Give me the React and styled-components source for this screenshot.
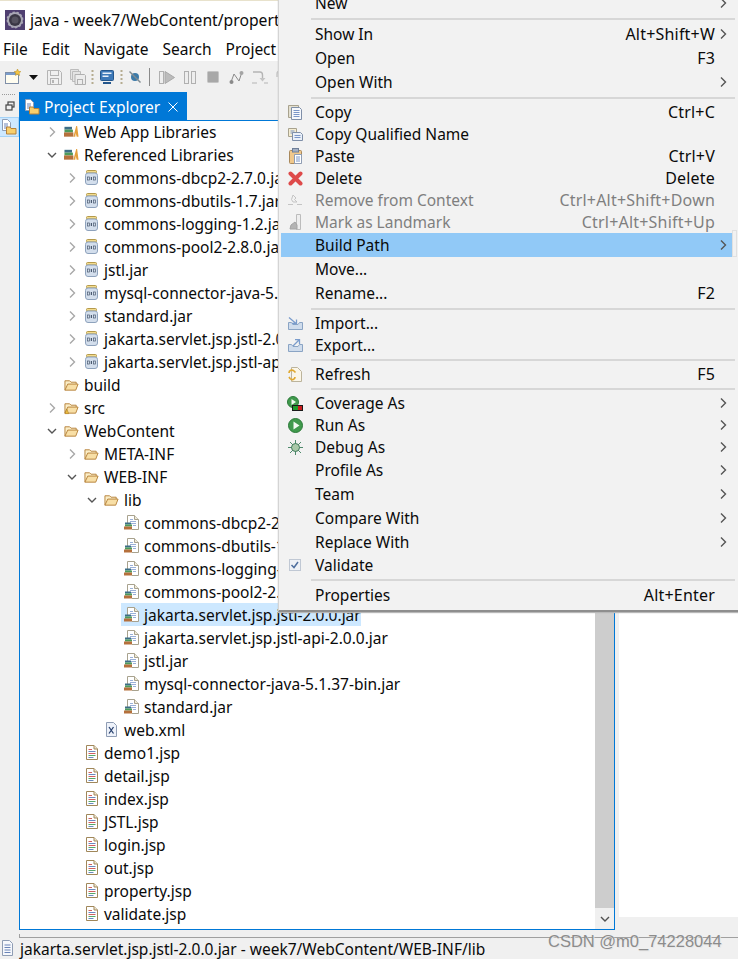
import React from "react";
import styled, { createGlobalStyle } from "styled-components";

const GlobalStyle = createGlobalStyle`
	html, body {
		margin: 0;
		padding: 0;
		background: #f0f0f0;
	}
	body {
		font-family: "Noto Sans", "Open Sans", "Liberation Sans", sans-serif;
		font-size: 15.5px;
		color: #0a0a0a;
	}
`;

const Window = styled.div`
	position: relative;
	width: 738px;
	height: 959px;
	overflow: hidden;
	background: #f0f0f0;
`;

const TitleBar = styled.div`
	display: flex;
	align-items: center;
	gap: 5px;
	height: 36px;
	padding: 3px 0 0 5px;
	box-sizing: border-box;
	background: #fff;
	border-top: 1px solid #e8e2cc;
	font-size: 15.7px;
	white-space: nowrap;
`;

const MenuBar = styled.div`
	display: flex;
	gap: 14px;
	height: 25px;
	padding-left: 3px;
	background: #fff;
	line-height: 27px;
`;

const Toolbar = styled.div`
	display: flex;
	align-items: center;
	height: 31px;
	padding: 1px 0 0 5px;
	box-sizing: border-box;
`;

const ToolSlot = styled.span`
	display: flex;
	margin-left: ${(p) => p.$gap || 0}px;
`;

const Workbench = styled.div`
	display: flex;
	height: 838px;
`;

const Strip = styled.div`
	display: flex;
	flex-direction: column;
	width: 19px;
	padding-top: 2px;
	box-sizing: border-box;
`;

const Dots = styled.div`
	width: 13px;
	margin-left: 2px;
	border-top: 1px dotted #9a9a9a;
`;

const StripButton = styled.div`
	display: flex;
	justify-content: center;
	margin-top: ${(p) => p.$top}px;
	height: ${(p) => p.$h}px;
	align-items: center;
	background: ${(p) => (p.$on ? "#cde8ff" : "transparent")};
	border: ${(p) => (p.$on ? "1px solid #a5d3f7" : "none")};
	border-left: none;
	box-sizing: border-box;
`;

const Center = styled.div`
	display: flex;
	flex-direction: column;
	width: 596px;
`;

const Tab = styled.div`
	display: flex;
	align-items: center;
	width: 168px;
	height: 28px;
	padding: 1px 0 0 5px;
	box-sizing: border-box;
	background: #0078d7;
	color: #fff;
	font-size: 15.6px;
	white-space: nowrap;
`;

const TabLabel = styled.span`
	margin: 0 8px 0 4px;
`;

const Panel = styled.div`
	display: flex;
	height: 810px;
	border: 1px solid #0078d7;
	box-sizing: border-box;
	background: #fff;
`;

const Tree = styled.div`
	flex: 1;
	min-width: 0;
	margin-top: -1px;
	overflow: hidden;
`;

const Scrollbar = styled.div`
	display: flex;
	flex-direction: column;
	width: 19px;
	background: #cdcdcd;
`;

const ScrollEnd = styled.div`
	display: flex;
	align-items: center;
	justify-content: center;
	height: 21px;
	margin-top: auto;
	background: #f0f0f0;
`;

const Row = styled.div`
	display: flex;
	align-items: center;
	height: 23px;
	padding-left: ${(p) => 24 + p.$level * 20}px;
	white-space: nowrap;
`;

const Twisty = styled.span`
	display: flex;
	justify-content: center;
	width: 20px;
	padding-right: 5px;
	box-sizing: border-box;
	flex: none;
`;

const RowBody = styled.span`
	display: flex;
	align-items: center;
	height: 23px;
	margin-left: -3px;
	padding: 0 0 0 3px;
	background: ${(p) => (p.$selected ? "#cde8ff" : "transparent")};
`;

const RowIcon = styled.span`
	display: flex;
	justify-content: center;
	width: 20px;
	padding-right: 5px;
	box-sizing: border-box;
	flex: none;
`;

const RightColumn = styled.div`
	width: 119px;
	margin-left: 4px;
	height: 825px;
	background: #fff;
`;

const StatusBar = styled.div`
	position: relative;
	display: flex;
	align-items: center;
	height: 22px;
	margin-top: 7px;
	padding-left: 2px;
	white-space: nowrap;
	&::before {
		content: "";
		position: absolute;
		left: 19px;
		right: 0;
		top: -3px;
		height: 3px;
		border-left: 1px solid #a0a0a0;
		border-bottom: 1px solid #a0a0a0;
	}
`;

const StatusText = styled.span`
	margin: 2px 0 0 7px;
	line-height: 20px;
`;

const Watermark = styled.div`
	position: absolute;
	left: 548px;
	top: 931px;
	font-family: "Liberation Sans", Arial, sans-serif;
	font-size: 16.5px;
	line-height: 20px;
	color: #8c8c8c;
	text-shadow: 1px 1px 0 #e8e8e8;
	white-space: nowrap;
`;

const ContextMenu = styled.div`
	position: absolute;
	left: 278px;
	top: -9px;
	width: 460px;
	padding: 0 6px 3px 2px;
	box-sizing: border-box;
	background: #f2f2f2;
	border-left: 1px solid #d4d4d4;
	border-bottom: 2px solid #8e8e8e;
	box-shadow: 0 1px 1px #b8b8b8;
	white-space: nowrap;
`;

const MenuRow = styled.div`
	position: relative;
	display: flex;
	align-items: center;
	height: ${(p) => (p.$tall ? 24 : 22)}px;
	color: ${(p) => (p.$disabled ? "#7f7f7f" : "#0a0a0a")};
	background: ${(p) => (p.$active ? "#91c9f7" : "transparent")};
	${(p) =>
		p.$active &&
		`&::after {
			content: "";
			position: absolute;
			left: 100%;
			top: -3px;
			bottom: 0;
			width: 5px;
			border: 1px solid #e0e0e0;
			box-sizing: border-box;
		}`}
`;

const MenuIcon = styled.span`
	display: flex;
	justify-content: center;
	width: 30px;
	margin-right: 4px;
	flex: none;
	padding-right: 2px;
	box-sizing: border-box;
`;

const Shortcut = styled.span`
	margin-left: auto;
	padding-right: 17px;
	font-size: 16px;
	letter-spacing: 0.2px;
`;

const SubArrow = styled.span`
	position: absolute;
	right: 4px;
	top: 50%;
	display: flex;
	margin-top: -6px;
`;

const Separator = styled.div`
	height: 2px;
	margin: 3px -3px 2px 30px;
	background: #d7d7d7;
`;

/* ---- drawings ---- */

const Chevron = ({ open, color }) =>
	open ? (
		<svg width="10" height="10" viewBox="0 0 10 10">
			<path d="M1 3l4 4 4-4" fill="none" stroke={color || "#555"} strokeWidth="1.4" />
		</svg>
	) : (
		<svg width="10" height="12" viewBox="0 0 10 12">
			<path d="M3 1.500l4.500 4.500L3 10.500" fill="none" stroke={color || "#a8a8a8"} strokeWidth="1.4" />
		</svg>
	);

const Eclipse = () => (
	<svg width="20" height="20" viewBox="0 0 20 20">
		<rect width="20" height="20" fill="#4f3f70" />
		<circle cx="10" cy="10" r="8.500" fill="#a8a6b4" />
		<circle cx="10" cy="10" r="8.500" fill="none" stroke="#4f3f70" strokeWidth="1.400" strokeDasharray="2 2.400" />
		<circle cx="10" cy="10" r="6" fill="#3a3745" />
		<circle cx="10" cy="10" r="3.500" fill="#55525f" />
	</svg>
);

const Library = () => (
	<svg width="16" height="13" viewBox="0 0 16 13">
		<rect x="0.500" y="1.500" width="8" height="3" fill="#3d6e86" />
		<rect x="0.500" y="4.500" width="9" height="3" fill="#4d9a5a" />
		<rect x="0" y="7.500" width="10" height="4.500" fill="#b5703c" />
		<path d="M10 12l3-11.500h1L15.500 12h-2L12.500 8 12 12z" fill="#e6a03c" />
	</svg>
);

const Folder = ({ warn }) => (
	<svg width="16" height="14" viewBox="0 0 16 14">
		<path d="M1 12.500V2.500h5l1.500 1.500H13v2" fill="#fbeec8" stroke="#b5813a" />
		<path d="M1 12.500L4 6h11l-2.500 6.500z" fill="#f8dfa6" stroke="#b5813a" />
		{warn && <path d="M1 13l2-5 2 5z" fill="#f0c040" stroke="#a87820" strokeWidth="0.600" />}
	</svg>
);

const Jar = () => (
	<svg width="13" height="15" viewBox="0 0 13 15">
		<rect x="1.500" y="0.500" width="10" height="2.500" rx="1" fill="#f4dc8c" stroke="#b59a4c" />
		<rect x="0.500" y="3" width="12" height="11.500" rx="2.500" fill="#d3deec" stroke="#8ea2bc" />
		<rect x="2.500" y="7" width="2" height="3" fill="none" stroke="#4a5a70" strokeWidth="0.700" />
		<rect x="5.800" y="7" width="1.200" height="3" fill="#4a5a70" />
		<rect x="8.500" y="7" width="2" height="3" fill="none" stroke="#4a5a70" strokeWidth="0.700" />
	</svg>
);

const JarDoc = () => (
	<svg width="15" height="15" viewBox="0 0 15 15">
		<path d="M3.500 9V.5h7l4 4v10H8" fill="#fff" stroke="#a8a28e" />
		<path d="M10.500.5v4h4" fill="#eee9d8" stroke="#a8a28e" />
		<path d="M6 4.500h3M6 6.500h6M7 8.500h5M9 10.500h3" stroke="#9ab0d8" />
		<rect x="1" y="7.500" width="6" height="2" fill="#3d6e86" />
		<rect x="1" y="9.500" width="7" height="2" fill="#4d9a5a" />
		<rect x="0" y="11.500" width="8" height="3" fill="#b5703c" />
	</svg>
);

const JspDoc = () => (
	<svg width="12" height="15" viewBox="0 0 12 15">
		<path d="M.5.500h7.500l3.500 3.500v10.500H.5z" fill="#fff" stroke="#a0875a" />
		<path d="M8 .5v3.500h3.500" fill="#efe6d0" stroke="#a0875a" />
		<path d="M2.500 4.500h3.500" stroke="#d06060" />
		<path d="M2.500 6.500h7" stroke="#6a8ac0" />
		<path d="M2.500 8.500h7" stroke="#d06060" />
		<path d="M2.500 10.500h7" stroke="#58a868" />
		<path d="M2.500 12.500h5" stroke="#6a8ac0" />
	</svg>
);

const XmlDoc = () => (
	<svg width="11" height="15" viewBox="0 0 11 15">
		<path d="M.5.500h7l3 3v11H.5z" fill="#eef2fa" stroke="#8f9db4" />
		<path d="M3 5l4.500 6.500M7.500 5L3 11.500" stroke="#27406e" strokeWidth="1.300" />
	</svg>
);

const PlainDoc = () => (
	<svg width="11" height="16" viewBox="0 0 11 16">
		<path d="M.5.500h7l3 3v12H.5z" fill="#f6f8fc" stroke="#8f9db4" />
		<path d="M2.500 5h6M2.500 7.500h6M2.500 10h6M2.500 12.500h6" stroke="#6a84b8" />
	</svg>
);

const ExplorerIcon = () => (
	<svg width="16" height="16" viewBox="0 0 16 16">
		<path d="M1.500.5h5l3 3v8h-8z" fill="#fff" stroke="#8f9db4" />
		<path d="M3 5h4M3 7h4M3 9h4" stroke="#6a84b8" />
		<path d="M5.500 15V8h3.500l1 1.500h5V15z" fill="#f8cf6c" stroke="#b5813a" />
	</svg>
);

const RestoreIcon = () => (
	<svg width="10" height="10" viewBox="0 0 10 10">
		<rect x="3" y="1" width="6" height="5" fill="none" stroke="#444" strokeWidth="1.200" />
		<rect x="1" y="4" width="6" height="5" fill="#f0f0f0" stroke="#444" strokeWidth="1.200" />
	</svg>
);

const CloseX = () => (
	<svg width="10" height="10" viewBox="0 0 10 10">
		<path d="M.5.500l9 9M9.500.5l-9 9" stroke="#fff" />
	</svg>
);

const NewWindow = () => (
	<svg width="16" height="16" viewBox="0 0 16 16">
		<rect x="0.500" y="3.500" width="13" height="11" fill="#fffdf0" stroke="#7f8fa8" />
		<rect x="1" y="4" width="12" height="2" fill="#7a9ccc" />
		<path d="M12.500 0l1 2.300 2.300.3-1.700 1.600.5 2.300-2.100-1.200-2.100 1.200.5-2.300L9.200 2.600l2.300-.3z" fill="#f5c542" stroke="#b08a20" strokeWidth="0.500" />
	</svg>
);

const DropTriangle = () => (
	<svg width="9" height="5" viewBox="0 0 9 5">
		<path d="M0 0h9L4.500 5z" fill="#111" />
	</svg>
);

const Floppy = () => (
	<svg width="15" height="15" viewBox="0 0 15 15">
		<path d="M.5.500h12l2 2v12H.5z" fill="#f0f0f0" stroke="#b4b4b4" />
		<rect x="3.500" y="0.500" width="8" height="5" fill="none" stroke="#b4b4b4" />
		<rect x="3.500" y="8.500" width="8" height="6" fill="none" stroke="#b4b4b4" />
		<rect x="5" y="10" width="2" height="3" fill="#b4b4b4" />
	</svg>
);

const FloppyAll = () => (
	<svg width="16" height="16" viewBox="0 0 16 16">
		<path d="M.5.500h8v10h-8z" fill="#e4e4e4" stroke="#bcbcbc" />
		<path d="M2.500 2.500h8v10h-8z" fill="#e4e4e4" stroke="#bcbcbc" />
		<path d="M5 5.500h9.500l1 1v9H5z" fill="#ececec" stroke="#b0b0b0" />
		<rect x="7.500" y="10.500" width="5" height="5" fill="none" stroke="#b0b0b0" />
	</svg>
);

const ToolDots = () => (
	<svg width="3" height="15" viewBox="0 0 3 15">
		<path d="M1.500 0v15" stroke="#b5ac90" strokeWidth="2" strokeDasharray="2 2" />
	</svg>
);

const Monitor = () => (
	<svg width="14" height="14" viewBox="0 0 14 14">
		<rect x="0.500" y="0.500" width="13" height="10" rx="1" fill="#3c78b8" stroke="#24568c" />
		<rect x="2.500" y="2.500" width="9" height="1.500" fill="#e8f0fa" />
		<rect x="2.500" y="5.500" width="6" height="1.500" fill="#e8f0fa" />
		<path d="M3 13h8" stroke="#24568c" strokeWidth="2" />
	</svg>
);

const SkipBreak = () => (
	<svg width="12" height="12" viewBox="0 0 12 12">
		<circle cx="6" cy="6" r="4" fill="#3c7aa8" />
		<path d="M0.500 0.500l11 11" stroke="#7f8a90" strokeWidth="1.400" />
	</svg>
);

const ToolDivider = styled.span`
	width: 1px;
	height: 18px;
	background: #8a8a8a;
	margin-left: 8px;
`;

const Resume = () => (
	<svg width="16" height="13" viewBox="0 0 16 13">
		<rect x="0.500" y="0.500" width="4" height="12" fill="#eee" stroke="#b0b0b0" />
		<path d="M6 .5L15.500 6.500 6 12.500z" fill="#bcbcbc" stroke="#a8a8a8" />
	</svg>
);

const Suspend = () => (
	<svg width="12" height="13" viewBox="0 0 12 13">
		<rect x="0.500" y="0.500" width="4" height="12" fill="#eee" stroke="#b0b0b0" />
		<rect x="7.500" y="0.500" width="4" height="12" fill="#eee" stroke="#b0b0b0" />
	</svg>
);

const StopSq = () => (
	<svg width="12" height="12" viewBox="0 0 12 12">
		<rect x="0.500" y="0.500" width="11" height="11" rx="1" fill="#a8a8a8" stroke="#c4c4c4" />
	</svg>
);

const Disconnect = () => (
	<svg width="15" height="15" viewBox="0 0 15 15">
		<path d="M2 12L5 4l5 7 3-9" fill="none" stroke="#8a8a8a" />
		<circle cx="2.500" cy="12" r="2" fill="#8a8a8a" />
		<circle cx="12.500" cy="3" r="2" fill="#a4a4a4" />
	</svg>
);

const StepInto = () => (
	<svg width="16" height="14" viewBox="0 0 16 14">
		<path d="M1 2h7c2 0 2.500 1.500 2.500 3v5" fill="none" stroke="#b4b4b4" strokeWidth="1.400" />
		<path d="M7.500 8l3 3.500 3-3.500z" fill="#c4c4c4" />
		<path d="M0 13h5M12 13h4" stroke="#b4b4b4" />
	</svg>
);

const StepReturn = () => (
	<svg width="8" height="14" viewBox="0 0 8 14">
		<path d="M1 7V4c0-2 1.500-3 3-3h4" fill="none" stroke="#c4c4c4" strokeWidth="1.400" />
	</svg>
);

const CopyIcon = () => (
	<svg width="15" height="15" viewBox="0 0 15 15">
		<path d="M.5.500h10v12h-10z" fill="#e4e0d0" stroke="#a8a28e" />
		<path d="M3.500 2.500h8l2 2v10h-10z" fill="#f6f8fc" stroke="#7f8fa8" />
		<path d="M5.500 5.500h6M5.500 7.500h6M5.500 9.500h6M5.500 11.500h6" stroke="#7a96c8" />
	</svg>
);

const CopyNameIcon = () => (
	<svg width="15" height="13" viewBox="0 0 15 13">
		<path d="M.5.500h8v8h-8z" fill="#f4ecd0" stroke="#a8a28e" />
		<path d="M2.500 3h4M2.500 5h4" stroke="#7a96c8" />
		<path d="M4.500 4.500h8l2 2v6h-10z" fill="#eaf0f8" stroke="#7f8fa8" />
		<path d="M6.500 7.500h6M6.500 9.500h6" stroke="#7a96c8" />
	</svg>
);

const PasteIcon = () => (
	<svg width="13" height="16" viewBox="0 0 13 16">
		<rect x="0.500" y="2.500" width="12" height="13" rx="1" fill="#f0c88c" stroke="#a8885c" />
		<rect x="3.500" y="0.500" width="6" height="3.500" fill="#a4b0c4" stroke="#6f7f98" />
		<path d="M5.500 6.500h7v9h-7z" fill="#fff" stroke="#8f9db4" />
		<path d="M7 9h4M7 11h4M7 13h4" stroke="#7a96c8" />
	</svg>
);

const DeleteIcon = () => (
	<svg width="15" height="15" viewBox="0 0 15 15">
		<path d="M2.500 2.500l10 10M12.500 2.500l-10 10" stroke="#de4a4a" strokeWidth="4" strokeLinecap="round" />
	</svg>
);

const RemoveIcon = () => (
	<svg width="14" height="12" viewBox="0 0 14 12">
		<path d="M5 1l3 3-1.500 1.500L9 8H5L3.500 5.500z" fill="none" stroke="#c4c4c4" />
		<path d="M0 10.500h5M9 10.500h5" stroke="#c4c4c4" />
	</svg>
);

const LandmarkIcon = () => (
	<svg width="12" height="16" viewBox="0 0 12 16">
		<path d="M7.500.5h4v15h-4z" fill="#eee" stroke="#bcbcbc" />
		<path d="M1 15l1-4 4-3 2 3v4z" fill="#b4b4b4" stroke="#a4a4a4" />
	</svg>
);

const ImportIcon = ({ out }) => (
	<svg width="15" height="13" viewBox="0 0 15 13">
		<path d="M.5 5.500h3l1.500 2h5l1.500-2h3v7H.5z" fill="#cfdcec" stroke="#8aa4c4" />
		{out ? (
			<path d="M5 7l6-6M7 .5h4.500V5" fill="none" stroke="#7a9ccc" strokeWidth="1.300" />
		) : (
			<path d="M1 .5l7 6M8.500 2.500v4H4" fill="none" stroke="#7a9ccc" strokeWidth="1.300" />
		)}
	</svg>
);

const RefreshIcon = () => (
	<svg width="14" height="15" viewBox="0 0 14 15">
		<path d="M3.500.5h6l4 4v10h-10z" fill="#fbf6e8" stroke="#bcb49c" />
		<path d="M1 6c0-2.500 3-4 5-2l1.500 1.500M7 10c0 2.500-3 3.500-5 1.500L1 10" fill="none" stroke="#e0a830" strokeWidth="1.700" />
	</svg>
);

const RunIcon = () => (
	<svg width="15" height="15" viewBox="0 0 15 15">
		<circle cx="7.500" cy="7.500" r="7" fill="#3f9a4c" stroke="#2d7a3a" />
		<path d="M5.500 3.500L11.500 7.500 5.500 11.500z" fill="#f0faf0" />
	</svg>
);

const CoverageIcon = () => (
	<svg width="16" height="15" viewBox="0 0 16 15">
		<circle cx="6" cy="6" r="5.500" fill="#3f9a4c" stroke="#2d7a3a" />
		<path d="M4.500 3L9 6 4.500 9z" fill="#f0faf0" />
		<rect x="5.500" y="9.500" width="10" height="5" fill="#c81e1e" stroke="#1a1a1a" />
		<rect x="6" y="10" width="5" height="4" fill="#1f9a2c" />
	</svg>
);

const DebugIcon = () => (
	<svg width="15" height="15" viewBox="0 0 15 15">
		<path d="M0 7.500h15M2 2l11 11M13 2L2 13M7.500 0v15" stroke="#4f8a6c" />
		<circle cx="7.500" cy="7.500" r="4" fill="#a8c8a8" stroke="#3f7a5c" />
	</svg>
);

const CheckIcon = () => (
	<svg width="12" height="12" viewBox="0 0 12 12">
		<rect x="0.500" y="0.500" width="11" height="11" fill="#eef1f6" stroke="#c0c8d4" />
		<path d="M2.500 6l2.500 2.500 4-5.500" fill="none" stroke="#4f6f9f" strokeWidth="1.500" />
	</svg>
);

/* ---- data ---- */

const jarNames = [
	"commons-dbcp2-2.7.0.jar",
	"commons-dbutils-1.7.jar",
	"commons-logging-1.2.jar",
	"commons-pool2-2.8.0.jar",
	"jstl.jar",
	"mysql-connector-java-5.1.37-bin.jar",
	"standard.jar",
	"jakarta.servlet.jsp.jstl-2.0.0.jar",
	"jakarta.servlet.jsp.jstl-api-2.0.0.jar",
];

const libFiles = [
	"commons-dbcp2-2.7.0.jar",
	"commons-dbutils-1.7.jar",
	"commons-logging-1.2.jar",
	"commons-pool2-2.8.0.jar",
	"jakarta.servlet.jsp.jstl-2.0.0.jar",
	"jakarta.servlet.jsp.jstl-api-2.0.0.jar",
	"jstl.jar",
	"mysql-connector-java-5.1.37-bin.jar",
	"standard.jar",
];

const jspFiles = ["demo1.jsp", "detail.jsp", "index.jsp", "JSTL.jsp", "login.jsp", "out.jsp", "property.jsp", "validate.jsp"];

const treeRows = [
	{ level: 0, twisty: "closed", icon: <Library />, label: "Web App Libraries" },
	{ level: 0, twisty: "open", icon: <Library />, label: "Referenced Libraries" },
	...jarNames.map((label) => ({ level: 1, twisty: "closed", icon: <Jar />, label })),
	{ level: 0, icon: <Folder />, label: "build" },
	{ level: 0, twisty: "closed", icon: <Folder warn />, label: "src" },
	{ level: 0, twisty: "open", icon: <Folder />, label: "WebContent" },
	{ level: 1, twisty: "closed", icon: <Folder />, label: "META-INF" },
	{ level: 1, twisty: "open", icon: <Folder />, label: "WEB-INF" },
	{ level: 2, twisty: "open", icon: <Folder />, label: "lib" },
	...libFiles.map((label, i) => ({ level: 3, icon: <JarDoc />, label, selected: i === 4 })),
	{ level: 2, icon: <XmlDoc />, label: "web.xml" },
	...jspFiles.map((label) => ({ level: 1, icon: <JspDoc />, label })),
];

const menuItems = [
	{ label: "New", tall: true, sub: true },
	{ sep: true },
	{ label: "Show In", tall: true, keys: "Alt+Shift+W", sub: true },
	{ label: "Open", tall: true, keys: "F3" },
	{ label: "Open With", tall: true, sub: true },
	{ sep: true },
	{ label: "Copy", icon: <CopyIcon />, keys: "Ctrl+C" },
	{ label: "Copy Qualified Name", icon: <CopyNameIcon /> },
	{ label: "Paste", icon: <PasteIcon />, keys: "Ctrl+V" },
	{ label: "Delete", icon: <DeleteIcon />, keys: "Delete" },
	{ label: "Remove from Context", icon: <RemoveIcon />, keys: "Ctrl+Alt+Shift+Down", disabled: true },
	{ label: "Mark as Landmark", icon: <LandmarkIcon />, keys: "Ctrl+Alt+Shift+Up", disabled: true },
	{ label: "Build Path", tall: true, sub: true, active: true },
	{ label: "Move...", tall: true },
	{ label: "Rename...", tall: true, keys: "F2" },
	{ sep: true },
	{ label: "Import...", icon: <ImportIcon /> },
	{ label: "Export...", icon: <ImportIcon out /> },
	{ sep: true },
	{ label: "Refresh", icon: <RefreshIcon />, keys: "F5" },
	{ sep: true },
	{ label: "Coverage As", icon: <CoverageIcon />, sub: true },
	{ label: "Run As", icon: <RunIcon />, sub: true },
	{ label: "Debug As", icon: <DebugIcon />, sub: true },
	{ label: "Profile As", tall: true, sub: true },
	{ label: "Team", tall: true, sub: true },
	{ label: "Compare With", tall: true, sub: true },
	{ label: "Replace With", tall: true, sub: true },
	{ label: "Validate", icon: <CheckIcon /> },
	{ sep: true },
	{ label: "Properties", tall: true, keys: "Alt+Enter" },
];

function TreeRow({ row }) {
	return (
		<Row $level={row.level}>
			<Twisty>{row.twisty && <Chevron open={row.twisty === "open"} />}</Twisty>
			<RowBody $selected={row.selected}>
				<RowIcon>{row.icon}</RowIcon>
				{row.label}
			</RowBody>
		</Row>
	);
}

function App() {
	return (
		<>
			<GlobalStyle />
			<Window>
				<TitleBar>
					<Eclipse />
					java - week7/WebContent/property.jsp - Eclipse IDE
				</TitleBar>
				<MenuBar>
					<span>File</span>
					<span>Edit</span>
					<span>Navigate</span>
					<span>Search</span>
					<span>Project</span>
				</MenuBar>
				<Toolbar>
					<NewWindow />
					<ToolSlot $gap={8}><DropTriangle /></ToolSlot>
					<ToolSlot $gap={9}><Floppy /></ToolSlot>
					<ToolSlot $gap={8}><FloppyAll /></ToolSlot>
					<ToolSlot $gap={5}><ToolDots /></ToolSlot>
					<ToolSlot $gap={6}><Monitor /></ToolSlot>
					<ToolSlot $gap={6}><ToolDots /></ToolSlot>
					<ToolSlot $gap={6}><SkipBreak /></ToolSlot>
					<ToolDivider />
					<ToolSlot $gap={9}><Resume /></ToolSlot>
					<ToolSlot $gap={9}><Suspend /></ToolSlot>
					<ToolSlot $gap={11}><StopSq /></ToolSlot>
					<ToolSlot $gap={10}><Disconnect /></ToolSlot>
					<ToolSlot $gap={8}><StepInto /></ToolSlot>
					<ToolSlot $gap={8}><StepReturn /></ToolSlot>
				</Toolbar>
				<Workbench>
					<Strip>
						<Dots />
						<StripButton $top={6} $h={10}><RestoreIcon /></StripButton>
						<StripButton $top={6} $h={20} $on><ExplorerIcon /></StripButton>
					</Strip>
					<Center>
						<Tab>
							<ExplorerIcon />
							<TabLabel>Project Explorer</TabLabel>
							<CloseX />
						</Tab>
						<Panel>
							<Tree>
								{treeRows.map((row, i) => (
									<TreeRow key={i} row={row} />
								))}
							</Tree>
							<Scrollbar>
								<ScrollEnd><Chevron open color="#505050" /></ScrollEnd>
							</Scrollbar>
						</Panel>
					</Center>
					<RightColumn />
				</Workbench>
				<StatusBar>
					<PlainDoc />
					<StatusText>jakarta.servlet.jsp.jstl-2.0.0.jar - week7/WebContent/WEB-INF/lib</StatusText>
				</StatusBar>
				<Watermark>CSDN @m0_74228044</Watermark>
				<ContextMenu>
					{menuItems.map((item, i) =>
						item.sep ? (
							<Separator key={i} />
						) : (
							<MenuRow key={i} $tall={item.tall} $disabled={item.disabled} $active={item.active}>
								<MenuIcon>{item.icon}</MenuIcon>
								{item.label}
								{item.keys && <Shortcut>{item.keys}</Shortcut>}
								{item.sub && (
									<SubArrow>
										<Chevron color="#555" />
									</SubArrow>
								)}
							</MenuRow>
						)
					)}
				</ContextMenu>
			</Window>
		</>
	);
}

export default App;
